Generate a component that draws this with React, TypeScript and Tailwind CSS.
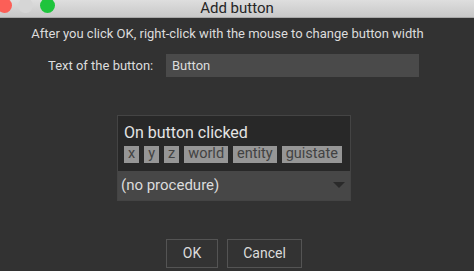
const tags = ["x", "y", "z", "world", "entity", "guistate"];

export default function App() {
  return (
    <div
      className="flex h-[271px] w-[474px] flex-col overflow-hidden bg-[#323232] text-[#dcdcdc]"
      style={{ fontFamily: "Roboto, 'Noto Sans', sans-serif" }}
    >
      {/* Title bar */}
      <div className="relative flex h-[18px] shrink-0 items-center justify-center border-b border-[#a8a8a8] bg-gradient-to-b from-[#dedede] to-[#c8c8c8]">
        <div className="absolute left-[-3px] top-[-2px] h-[15px] w-[15px] rounded-full bg-[#fc5f57]" />
        <div className="absolute left-[18px] top-[-2px] h-[15px] w-[15px] rounded-full bg-[#d6d6d6]" />
        <div className="absolute left-[40px] top-[-2px] h-[15px] w-[15px] rounded-full bg-[#1ec43c]" />
        <span className="text-[15px] leading-none text-[#262626]">Add button</span>
      </div>

      {/* Instruction */}
      <div className="mt-[8px] pr-[19px] text-center text-[13px] leading-[16px]">
        After you click OK, right-click with the mouse to change button width
      </div>

      {/* Text of the button */}
      <div className="mt-[12px] flex items-center pl-[48px]">
        <span className="w-[118px] text-[13px]">Text of the button:</span>
        <div className="flex h-[23px] w-[253px] items-center bg-[#4a4a4a] pl-[6px] text-[13px]">
          Button
        </div>
      </div>

      {/* Procedure panel */}
      <div className="mt-[38px] pl-[117px]">
        <div className="w-[234px] border border-[#444444] bg-[#282828]">
          <div className="px-[6px] pt-[8px] text-[16px] leading-[18px] text-[#e4e4e4]">
            On button clicked
          </div>
          <div className="flex gap-[5px] px-[6px] pb-[8px] pt-[4px]">
            {tags.map((t) => (
              <span
                key={t}
                className="flex h-[17px] items-center bg-[#969696] px-[4px] text-[14.5px] leading-none text-[#424242]"
              >
                {t}
              </span>
            ))}
          </div>
          <div className="flex h-[29px] items-center justify-between bg-[#474747] pl-[3px] pr-[5px] text-[15px]">
            <span>(no procedure)</span>
            <svg width="12" height="7" viewBox="0 0 12 7">
              <path d="M0 0 L12 0 L6 6 Z" fill="#2a2a2a" />
            </svg>
          </div>
        </div>
      </div>

      {/* Buttons */}
      <div className="mt-[38px] flex gap-[9px] pl-[166px]">
        <button className="h-[29px] w-[52px] border border-[#545454] bg-[#333333] text-[14px] text-[#dcdcdc]">
          OK
        </button>
        <button className="h-[29px] w-[75px] border border-[#545454] bg-[#333333] text-[14px] text-[#dcdcdc]">
          Cancel
        </button>
      </div>
    </div>
  );
}
